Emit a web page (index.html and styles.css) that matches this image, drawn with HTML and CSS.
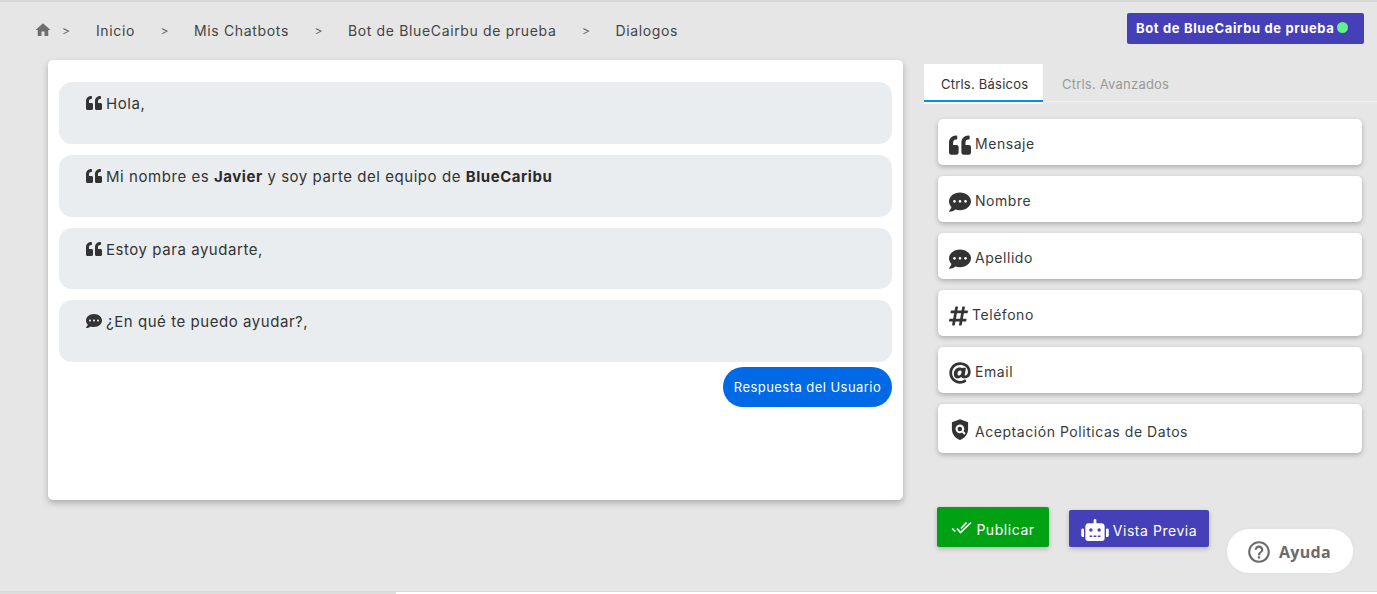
FILE: index.html
```html
<!DOCTYPE html>
<html lang="es">
<head>
<meta charset="utf-8">
<title>Dialogos</title>
<link rel="stylesheet" href="styles.css">
</head>
<body>
<svg class="defs" aria-hidden="true">
  <symbol id="i-quote" viewBox="0 0 512 512"><path d="M464 256h-80v-64c0-35.3 28.7-64 64-64h8c13.3 0 24-10.7 24-24V56c0-13.3-10.7-24-24-24h-8c-88.4 0-160 71.6-160 160v240c0 26.5 21.5 48 48 48h128c26.5 0 48-21.5 48-48V304c0-26.5-21.5-48-48-48zm-288 0H96v-64c0-35.3 28.7-64 64-64h8c13.3 0 24-10.7 24-24V56c0-13.3-10.7-24-24-24h-8C71.6 32 0 103.6 0 192v240c0 26.5 21.5 48 48 48h128c26.5 0 48-21.5 48-48V304c0-26.5-21.5-48-48-48z"/></symbol>
  <symbol id="i-dots" viewBox="0 0 512 512"><path d="M256 32C114.6 32 0 125.1 0 240c0 49.6 21.4 95 57 130.7C44.5 421.1 2.7 466 2.2 466.5c-2.2 2.3-2.8 5.7-1.5 8.7S4.8 480 8 480c66.3 0 116-31.8 140.6-51.4 32.7 12.3 69 19.4 107.4 19.4 141.4 0 256-93.1 256-208S397.4 32 256 32zM128 272c-17.7 0-32-14.3-32-32s14.3-32 32-32 32 14.3 32 32-14.3 32-32 32zm128 0c-17.7 0-32-14.3-32-32s14.3-32 32-32 32 14.3 32 32-14.3 32-32 32zm128 0c-17.7 0-32-14.3-32-32s14.3-32 32-32 32 14.3 32 32-14.3 32-32 32z"/></symbol>
  <symbol id="i-hash" viewBox="0 0 448 512"><path d="M440.667 182.109l7.143-40c1.313-7.355-4.342-14.109-11.813-14.109h-74.81l14.623-81.891C377.123 38.754 371.468 32 363.997 32h-40.632a12 12 0 0 0-11.813 9.891L296.175 128H197.54l14.623-81.891C213.477 38.754 207.822 32 200.35 32h-40.632a12 12 0 0 0-11.813 9.891L132.528 128H53.432a12 12 0 0 0-11.813 9.891l-7.143 40C33.163 185.246 38.818 192 46.289 192h74.81L98.242 320H19.146a12 12 0 0 0-11.813 9.891l-7.143 40C-1.123 377.246 4.532 384 12.003 384h74.81L72.19 465.891C70.877 473.246 76.532 480 84.003 480h40.632a12 12 0 0 0 11.813-9.891L151.826 384h98.634l-14.623 81.891C234.523 473.246 240.178 480 247.65 480h40.632a12 12 0 0 0 11.813-9.891L315.472 384h79.096a12 12 0 0 0 11.813-9.891l7.143-40c1.313-7.355-4.342-14.109-11.813-14.109h-74.81l22.857-128h79.096a12 12 0 0 0 11.813-9.891zM261.889 320h-98.634l22.857-128h98.634l-22.857 128z"/></symbol>
  <symbol id="i-at" viewBox="0 0 512 512"><path d="M256 8C118.941 8 8 118.919 8 256c0 137.059 110.919 248 248 248 48.154 0 95.342-14.14 135.408-40.223 12.005-7.815 14.625-24.288 5.552-35.372l-10.177-12.433c-7.671-9.371-21.179-11.667-31.373-5.129C325.92 429.757 291.314 440 256 440c-101.458 0-184-82.542-184-184S154.542 72 256 72c100.139 0 184 57.619 184 160 0 38.786-21.093 79.742-58.17 83.693-17.349-.454-16.91-12.857-13.476-30.024l23.433-121.11C394.653 149.75 383.308 136 368.225 136h-44.981a13.518 13.518 0 0 0-13.432 11.993l-.01.092c-14.697-17.901-40.448-21.775-59.971-21.775-74.58 0-137.831 62.234-137.831 151.46 0 65.303 36.785 105.87 96 105.87 26.984 0 57.369-15.637 74.991-38.333 9.522 34.104 40.613 34.103 70.71 34.103C462.609 379.41 504 307.798 504 232 504 95.653 394.023 8 256 8zm-21.68 304.43c-22.249 0-36.07-15.623-36.07-40.771 0-44.993 30.779-72.729 58.63-72.729 22.292 0 35.601 15.241 35.601 40.77 0 45.061-33.875 72.73-58.161 72.73z"/></symbol>
  <symbol id="i-shield" viewBox="0 0 20 24"><path fill-rule="evenodd" d="M10 0 19 3.4V11c0 5.6-3.8 10.6-9 12C4.800 21.600 1 16.600 1 11V3.400ZM9.800 6a4.800 4.800 0 1 0 2.500 8.900l2.400 2.400 1.600-1.600-2.300-2.300A4.800 4.800 0 0 0 9.800 6Zm0 2.300a2.500 2.500 0 1 1 0 5 2.500 2.500 0 0 1 0-5Z"/></symbol>
</svg>
<div class="page">
  <header class="topbar">
    <nav class="crumbs">
      <svg class="home" viewBox="0 0 24 24"><path d="M10 20v-6h4v6h5v-8h3L12 3 2 12h3v8z"/></svg>
      <span class="sep sep-first">&gt;</span>
      <span class="crumb">Inicio</span>
      <span class="sep">&gt;</span>
      <span class="crumb">Mis Chatbots</span>
      <span class="sep">&gt;</span>
      <span class="crumb">Bot de BlueCairbu de prueba</span>
      <span class="sep">&gt;</span>
      <span class="crumb">Dialogos</span>
    </nav>
    <div class="bot-badge">Bot de BlueCairbu de prueba<span class="dot"></span></div>
  </header>
  <main class="layout">
    <section class="canvas">
      <div class="msg"><svg class="msg-icon"><use href="#i-quote"/></svg>Hola,</div>
      <div class="msg"><svg class="msg-icon"><use href="#i-quote"/></svg>Mi nombre es <b>Javier</b> y soy parte del equipo de <b>BlueCaribu</b></div>
      <div class="msg"><svg class="msg-icon"><use href="#i-quote"/></svg>Estoy para ayudarte,</div>
      <div class="msg"><svg class="msg-icon"><use href="#i-dots"/></svg>¿En qué te puedo ayudar?,</div>
      <div class="reply-row"><span class="reply">Respuesta del Usuario</span></div>
    </section>
    <aside class="side">
      <div class="tabs">
        <span class="tab tab-active">Ctrls. Básicos</span>
        <span class="tab">Ctrls. Avanzados</span>
      </div>
      <ul class="controls">
        <li class="control"><svg class="c-icon"><use href="#i-quote"/></svg>Mensaje</li>
        <li class="control"><svg class="c-icon"><use href="#i-dots"/></svg>Nombre</li>
        <li class="control"><svg class="c-icon"><use href="#i-dots"/></svg>Apellido</li>
        <li class="control"><svg class="c-icon c-icon-hash"><use href="#i-hash"/></svg>Teléfono</li>
        <li class="control"><svg class="c-icon"><use href="#i-at"/></svg>Email</li>
        <li class="control control-tall"><svg class="c-icon c-icon-shield"><use href="#i-shield"/></svg>Aceptación Politicas de Datos</li>
      </ul>
      <div class="actions">
        <button class="btn btn-green">
          <svg class="check" viewBox="0 0 20 14"><path d="M.7 7.500 3.800 10.500M5.500 7.500 9 11.500 19.500 1.500M9.500 7.500 15 1.500" fill="none" stroke="#fff" stroke-width="1.700"/></svg>
          <span>Publicar</span>
        </button>
        <button class="btn btn-indigo">
          <svg class="robot" viewBox="0 0 640 512"><path d="M32,224H64V416H32A31.96166,31.96166,0,0,1,0,384V256A31.96166,31.96166,0,0,1,32,224Zm512-48V448a64.06328,64.06328,0,0,1-64,64H160a64.06328,64.06328,0,0,1-64-64V176a79.974,79.974,0,0,1,80-80H288V32a32,32,0,0,1,64,0V96H464A79.974,79.974,0,0,1,544,176ZM264,256a40,40,0,1,0-40,40A39.997,39.997,0,0,0,264,256Zm-8,128H192v32h64Zm96,0H288v32h64ZM456,256a40,40,0,1,0-40,40A39.997,39.997,0,0,0,456,256Zm-8,128H384v32h64ZM640,256V384a31.96166,31.96166,0,0,1-32,32H576V224h32A31.96166,31.96166,0,0,1,640,256Z"/></svg>
          <span>Vista Previa</span>
        </button>
      </div>
    </aside>
  </main>
  <div class="help">
    <svg class="help-icon" viewBox="0 0 24 24"><path d="M11 18h2v-2h-2v2zm1-16C6.480 2 2 6.480 2 12s4.480 10 10 10 10-4.480 10-10S17.520 2 12 2zm0 18c-4.410 0-8-3.590-8-8s3.590-8 8-8 8 3.590 8 8-3.590 8-8 8zm0-14c-2.210 0-4 1.790-4 4h2c0-1.100.9-2 2-2s2 .9 2 2c0 2-3 1.750-3 5h2c0-2.250 3-2.500 3-5 0-2.210-1.790-4-4-4z"/></svg>
    Ayuda
  </div>
  <div class="scrollbar"><div class="scroll-thumb"></div></div>
</div>
</body>
</html>
```

FILE: styles.css
```css
* { box-sizing: border-box; }
html, body { margin: 0; height: 100%; overflow: hidden; }
body {
  background: #e6e6e6;
  font-family: "Inter", "Liberation Sans", sans-serif;
  font-size: 14px;
  letter-spacing: 0.55px;
  color: #333;
}
.defs { display: none; }
.page {
  position: relative;
  height: 594px;
  border-top: 2px solid #d8d8d8;
  display: flex;
  flex-direction: column;
}
.topbar {
  height: 58px;
  padding: 11px 13px 0 34px;
  display: flex;
  justify-content: space-between;
  align-items: flex-start;
  flex: none;
}
.crumbs {
  display: flex;
  align-items: center;
  height: 34px;
  color: #444;
  letter-spacing: 0.65px;
}
.home { width: 18px; height: 18px; fill: #6e6e6e; margin-right: 10px; flex: none; }
.sep { font-size: 12px; color: #666; margin: 0 25.500px; letter-spacing: 0; }
.sep-first { margin: 0 26px 0 0; }
.bot-badge {
  background: #4640b8;
  color: #fff;
  font-weight: 700;
  font-size: 13px;
  letter-spacing: 0.64px;
  width: 237px;
  height: 31px;
  padding-left: 9px;
  border-radius: 2px;
  display: flex;
  align-items: center;
  line-height: 1;
}
.dot {
  width: 11px;
  height: 11px;
  margin: -2px 0 0 3px;
  border-radius: 50%;
  background: #66f08c;
}
.layout { display: flex; align-items: flex-start; flex: none; }
.canvas {
  width: 855px;
  height: 440px;
  margin-left: 48px;
  padding: 22px 11px 0;
  background: #fff;
  border-radius: 5px;
  box-shadow: 0 3px 6px rgba(0,0,0,.25);
  display: flex;
  flex-direction: column;
  gap: 11px;
}
.msg {
  height: 61.750px;
  padding: 12px 27px;
  background: #eaedf0;
  border-radius: 13px;
  line-height: 20px;
  font-size: 15px;
  letter-spacing: 0.55px;
  color: #333;
}
.msg b { font-weight: 700; color: #2b2b2b; }
.msg-icon {
  width: 16px;
  height: 16px;
  fill: #333;
  margin-right: 4px;
  vertical-align: -2px;
}
.reply-row { display: flex; justify-content: flex-end; margin-top: -6px; }
.reply {
  width: 169px;
  height: 40px;
  background: #006ae6;
  color: #fff;
  border-radius: 20px;
  font-size: 13px;
  letter-spacing: 0.45px;
  display: flex;
  align-items: center;
  justify-content: center;
}
.side { width: 453px; margin-left: 21px; padding-top: 4px; }
.tabs {
  display: flex;
  height: 38px;
  border-bottom: 1px solid #eef1f2;
}
.tab {
  height: 38px;
  display: flex;
  align-items: center;
  padding: 2px 0 0 19px;
  font-size: 13px;
  letter-spacing: 0.22px;
  color: #999;
}
.tab-active {
  width: 119px;
  padding: 4px 0 0 17px;
  background: #fff;
  color: #333;
  border-bottom: 2px solid #008ff5;
  box-shadow: 0 2px 0 #fff;
  position: relative;
}
.controls {
  list-style: none;
  margin: 17px 15px 0 14px;
  padding: 0;
  display: flex;
  flex-direction: column;
  gap: 11px;
}
.control {
  height: 46px;
  padding: 2px 0 0 11px;
  background: #fff;
  border-radius: 5px;
  box-shadow: 0 2px 5px rgba(0,0,0,.25);
  display: flex;
  align-items: center;
  color: #3a3a3a;
}
.control-tall { height: 49px; padding-top: 6px; }
.c-icon { width: 22px; height: 22px; fill: #333; margin: 4px 4px 0 0; flex: none; }
.c-icon-hash { width: 19px; }
.c-icon-shield { width: 18px; height: 22px; margin: 0 6px 3px 2px; }
.actions {
  display: flex;
  align-items: flex-end;
  gap: 20px;
  margin: 54px 0 0 13px;
}
.btn {
  border: 0;
  border-radius: 2px;
  color: #fff;
  font: inherit;
  letter-spacing: inherit;
  display: flex;
  align-items: center;
  justify-content: center;
  padding: 3px 0 0;
  box-shadow: 0 2px 5px rgba(0,0,0,.22);
}
.btn-green { width: 112px; height: 40px; background: #00a214; gap: 4px; padding-top: 5px; }
.btn-indigo { width: 140px; height: 37px; background: #4640b8; gap: 4px; }
.check { width: 21px; height: 14px; margin-top: -3px; }
.robot { width: 28px; height: 22px; fill: #fff; }
.help {
  position: absolute;
  left: 1227px;
  top: 527px;
  width: 126px;
  height: 44px;
  padding: 1px 0 0 19px;
  background: #fff;
  border-radius: 22px;
  box-shadow: 0 0 0 2px #e0e4e4;
  display: flex;
  align-items: center;
  gap: 7px;
  font-family: "Open Sans", "Liberation Sans", sans-serif;
  font-weight: 700;
  font-size: 16px;
  letter-spacing: 0.3px;
  color: #6b6b6b;
}
.help-icon { width: 26px; height: 26px; fill: #6b6b6b; }
.scrollbar {
  position: absolute;
  left: 0;
  right: 0;
  top: 589px;
  height: 3px;
  background: #fff;
  border-top: 1px solid #d8d8d8;
}
.scroll-thumb { width: 396px; height: 2px; background: #dcdede; }
```
